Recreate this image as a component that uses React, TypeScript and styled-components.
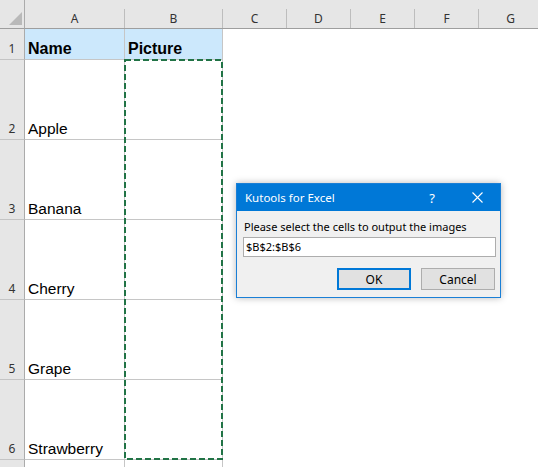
import styled, { createGlobalStyle } from "styled-components";

const GlobalStyle = createGlobalStyle`
  body {
    margin: 0;
    background: #ffffff;
    overflow: hidden;
  }
`;

const columns = ["A", "B", "C", "D", "E", "F", "G"];

const rows = [
  { num: 1, name: "Name", picture: "Picture", head: true },
  { num: 2, name: "Apple" },
  { num: 3, name: "Banana" },
  { num: 4, name: "Cherry" },
  { num: 5, name: "Grape" },
  { num: 6, name: "Strawberry" },
  { num: 7, name: "" },
];

const App = () => {
  return (
    <Sheet>
      <GlobalStyle />
      <Grid>
        <Corner>
          <svg width="24" height="28" viewBox="0 0 24 28">
            <polygon points="9,25 22,25 22,12" fill="#b9b9b9" />
          </svg>
        </Corner>
        {columns.map((c) => (
          <ColHeader key={c}>
            <ColLetter>{c}</ColLetter>
          </ColHeader>
        ))}

        {rows.map((r) => (
          <Row key={r.num} r={r} />
        ))}
      </Grid>

      <Selection>
        <svg width="99" height="401" viewBox="0 0 99 401">
          <rect
            x="1"
            y="1"
            width="97"
            height="399"
            fill="none"
            stroke="#217346"
            strokeWidth="2"
            strokeDasharray="6 3"
          />
        </svg>
      </Selection>

      <Dialog>
        <TitleBar>
          <Title>Kutools for Excel</Title>
          <HelpMark>?</HelpMark>
          <CloseButton>
            <svg width="11" height="11" viewBox="0 0 11 11">
              <path d="M0.5 0.5 L10.5 10.5 M10.5 0.5 L0.5 10.5" stroke="#ffffff" strokeWidth="1.1" />
            </svg>
          </CloseButton>
        </TitleBar>
        <DialogBody>
          <Prompt>Please select the cells to output the images</Prompt>
          <RangeInput>$B$2:$B$6</RangeInput>
          <ButtonRow>
            <DialogButton $primary>OK</DialogButton>
            <DialogButton>Cancel</DialogButton>
          </ButtonRow>
        </DialogBody>
      </Dialog>
    </Sheet>
  );
};

type RowProps = {
  r: { num: number; name: string; picture?: string; head?: boolean };
};

const Row = ({ r }: RowProps) => (
  <>
    <RowHeader>{r.num}</RowHeader>
    <Cell $grid $head={r.head} $bold={r.head}>
      {r.name}
    </Cell>
    <Cell $grid $head={r.head} $bold={r.head}>
      {r.picture}
    </Cell>
    {columns.slice(2).map((c) => (
      <Cell key={c} />
    ))}
  </>
);

const Sheet = styled.div`
  position: relative;
  width: 538px;
  height: 467px;
  overflow: hidden;
  background: #ffffff;
`;

const Grid = styled.div`
  display: grid;
  grid-template-columns: 25px 100px 98px 64px 64px 64px 64px 64px;
  grid-template-rows: 29px 31px repeat(6, 80px);
`;

const Corner = styled.div`
  background: #e6e6e6;
  border-right: 1px solid #ababab;
  border-bottom: 1px solid #9e9e9e;
  box-sizing: border-box;
  display: flex;
`;

const ColHeader = styled.div`
  background: #e6e6e6;
  border-bottom: 1px solid #9e9e9e;
  box-sizing: border-box;
  padding-top: 9px;
  display: flex;
`;

const ColLetter = styled.div`
  flex: 1;
  display: flex;
  align-items: center;
  justify-content: center;
  border-right: 1px solid #bdbdbd;
  font-family: "Noto Sans", "Open Sans", sans-serif;
  font-size: 12px;
  color: #333333;
`;

const RowHeader = styled.div`
  background: #e6e6e6;
  border-right: 1px solid #ababab;
  border-bottom: 1px solid #c4c4c4;
  box-sizing: border-box;
  display: flex;
  align-items: flex-end;
  justify-content: center;
  padding-bottom: 2px;
  font-family: "Noto Sans", "Open Sans", sans-serif;
  font-size: 12px;
  line-height: 16px;
  color: #333333;
`;

type CellProps = {
  $grid?: boolean;
  $head?: boolean;
  $bold?: boolean;
};

const Cell = styled.div<CellProps>`
  box-sizing: border-box;
  background: ${({ $head }) => ($head ? "#cce8fc" : "#ffffff")};
  border-right: 1px solid ${({ $grid }) => ($grid ? "#c6c6c6" : "transparent")};
  border-bottom: 1px solid ${({ $grid }) => ($grid ? "#c6c6c6" : "transparent")};
  display: flex;
  align-items: flex-end;
  padding: 0 0 1px 3px;
  font-family: "Liberation Sans", Arial, sans-serif;
  font-size: ${({ $bold }) => ($bold ? "16px" : "15.5px")};
  font-weight: ${({ $bold }) => ($bold ? 700 : 400)};
  line-height: 18px;
  color: #000000;
  white-space: nowrap;
`;

const Selection = styled.div`
  position: absolute;
  left: 124px;
  top: 59px;
  width: 99px;
  height: 401px;
  display: flex;
  pointer-events: none;
`;

const Dialog = styled.div`
  position: absolute;
  left: 236px;
  top: 183px;
  width: 265px;
  box-sizing: border-box;
  border: 1px solid #1a7fd6;
  background: #f0f0f0;
  box-shadow: 0 0 7px rgba(0, 0, 0, 0.28);
  font-family: "Noto Sans", "Open Sans", sans-serif;
  font-size: 11px;
`;

const TitleBar = styled.div`
  height: 27px;
  background: #0078d7;
  display: flex;
  align-items: center;
  padding: 0 0 0 8px;
  color: #ffffff;
`;

const Title = styled.div`
  flex: 1;
  font-size: 11.5px;
`;

const HelpMark = styled.div`
  width: 20px;
  text-align: center;
  font-size: 13px;
  margin-right: 12px;
`;

const CloseButton = styled.div`
  width: 46px;
  height: 27px;
  display: flex;
  align-items: center;
  justify-content: center;
`;

const DialogBody = styled.div`
  padding: 8px 4px 7px 6px;
  display: flex;
  flex-direction: column;
`;

const Prompt = styled.div`
  padding-left: 1px;
  line-height: 16px;
  color: #000000;
`;

const RangeInput = styled.div`
  margin-top: 2px;
  height: 20px;
  box-sizing: border-box;
  border: 1px solid #adadad;
  background: #ffffff;
  padding-left: 2px;
  line-height: 18px;
  color: #000000;
`;

const ButtonRow = styled.div`
  margin-top: 11px;
  display: flex;
  justify-content: flex-end;
  gap: 10px;
  padding-right: 1px;
`;

const DialogButton = styled.div<{ $primary?: boolean }>`
  width: 74px;
  height: 22px;
  box-sizing: border-box;
  background: #e1e1e1;
  border: ${({ $primary }) => ($primary ? "2px solid #0078d7" : "1px solid #adadad")};
  display: flex;
  align-items: center;
  justify-content: center;
  font-size: 12px;
  color: #000000;
`;

export default App;
